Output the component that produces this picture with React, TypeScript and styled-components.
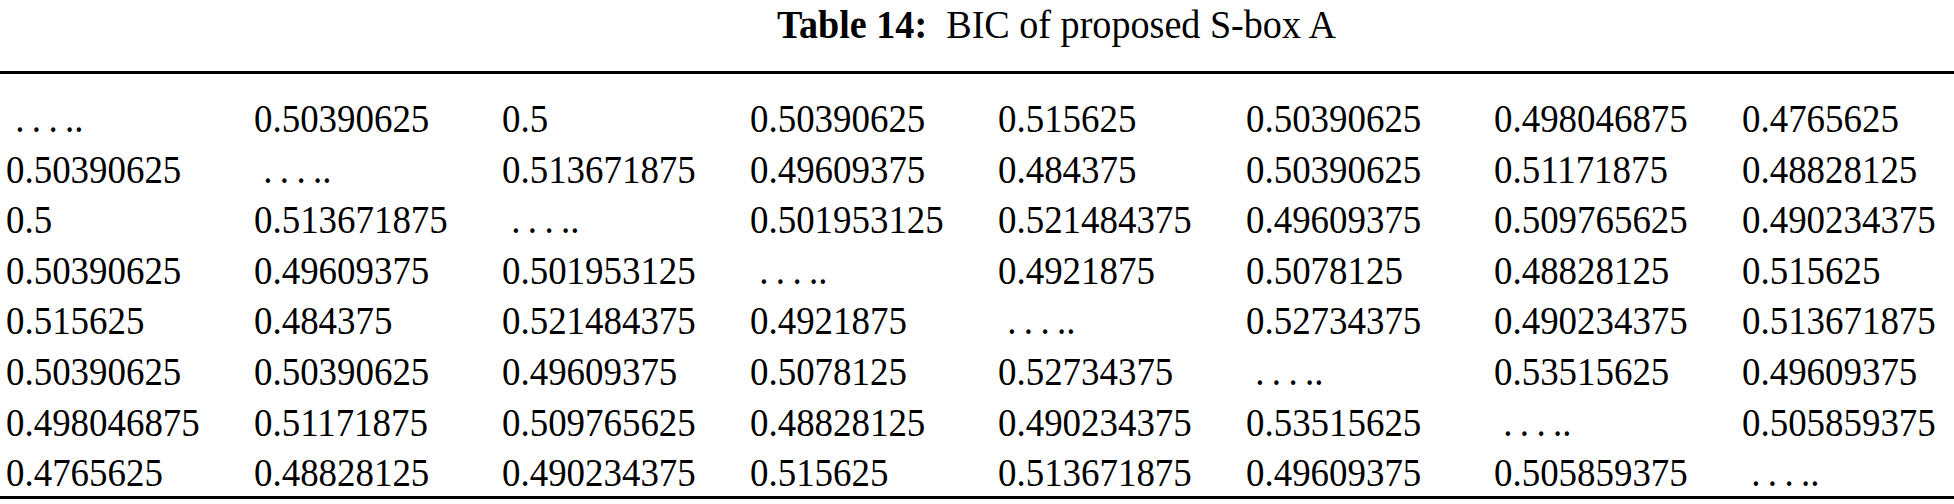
import styled, { createGlobalStyle } from "styled-components";

const GlobalStyle = createGlobalStyle`
  html, body {
    margin: 0;
    padding: 0;
    background: #ffffff;
  }
  body {
    font-family: "Liberation Serif", "Times New Roman", serif;
    color: #000;
  }
`;

const Page = styled.div`
  width: 1954px;
  height: 504px;
  overflow: hidden;
  background: #fff;
`;

const Caption = styled.div`
  padding: 1px 0 0 158px;
  height: 71px;
  box-sizing: border-box;
  text-align: center;
  font-size: 41px;
  line-height: 46px;
  white-space: pre;
`;

// the source renders its serif a little condensed
const CaptionText = styled.span`
  display: inline-block;
  transform: scaleX(0.93);
  transform-origin: center;
`;

const CaptionLabel = styled.b`
  font-weight: bold;
`;

const Table = styled.div`
  border-top: 3px solid #000;
  border-bottom: 3px solid #000;
  padding: 24px 0 3px 6px;
  display: grid;
  grid-template-columns: repeat(7, 248px) 1fr;
  row-gap: 9.6px;
  font-size: 41px;
  line-height: 41px;
`;

const Cell = styled.div`
  white-space: pre;
`;

const CellText = styled.span`
  display: inline-block;
  transform: scaleX(0.9);
  transform-origin: left;
`;

const DOTS = "\u00a0.\u2009.\u2009.\u2009..";

const rows: string[][] = [
  ["", "0.50390625", "0.5", "0.50390625", "0.515625", "0.50390625", "0.498046875", "0.4765625"],
  ["0.50390625", "", "0.513671875", "0.49609375", "0.484375", "0.50390625", "0.51171875", "0.48828125"],
  ["0.5", "0.513671875", "", "0.501953125", "0.521484375", "0.49609375", "0.509765625", "0.490234375"],
  ["0.50390625", "0.49609375", "0.501953125", "", "0.4921875", "0.5078125", "0.48828125", "0.515625"],
  ["0.515625", "0.484375", "0.521484375", "0.4921875", "", "0.52734375", "0.490234375", "0.513671875"],
  ["0.50390625", "0.50390625", "0.49609375", "0.5078125", "0.52734375", "", "0.53515625", "0.49609375"],
  ["0.498046875", "0.51171875", "0.509765625", "0.48828125", "0.490234375", "0.53515625", "", "0.505859375"],
  ["0.4765625", "0.48828125", "0.490234375", "0.515625", "0.513671875", "0.49609375", "0.505859375", ""],
];

export default function App() {
  return (
    <Page>
      <GlobalStyle />
      <Caption>
        <CaptionText>
          <CaptionLabel>Table 14:</CaptionLabel>
          {"  BIC of proposed S-box A"}
        </CaptionText>
      </Caption>
      <Table>
        {rows.map((row, r) =>
          row.map((v, c) => (
            <Cell key={`${r}-${c}`}>
              <CellText>{v === "" ? DOTS : v}</CellText>
            </Cell>
          ))
        )}
      </Table>
    </Page>
  );
}
